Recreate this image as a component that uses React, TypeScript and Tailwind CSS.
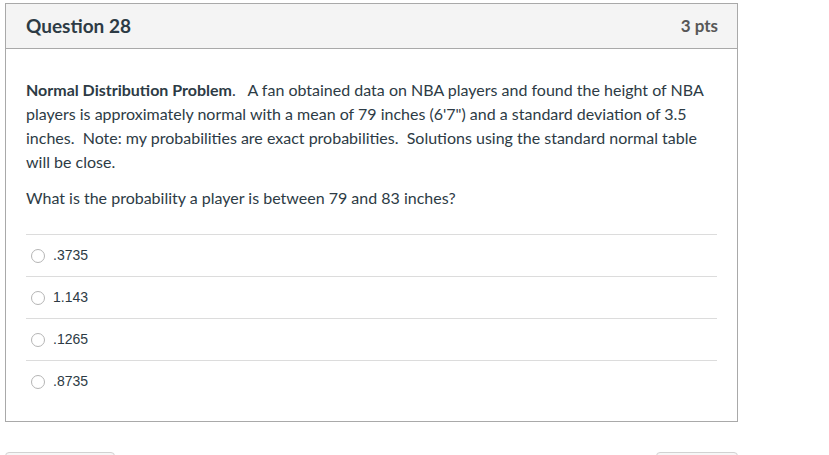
import React from "react";

const answers = [".3735", "1.143", ".1265", ".8735"];

export default function App() {
  return (
    <div className="min-h-screen bg-white pt-[3px] pl-[5px]" style={{ fontFamily: "Lato, 'Liberation Sans', sans-serif" }}>
      <div className="w-[733px] border border-[#a9a9a9] bg-white">
        {/* Header */}
        <div className="flex items-center justify-between h-[45px] bg-[#f4f4f4] border-b border-[#a9a9a9] pl-[20px] pr-[19px]">
          <span className="text-[19px] font-bold text-[#2d3b45]">Question 28</span>
          <span className="text-[17px] font-bold text-[#575757]">3 pts</span>
        </div>

        {/* Body */}
        <div className="px-[20px] pt-[29px] pb-[19px] text-[#2d3b45]">
          <p className="text-[16px] leading-[24px]">
            <strong>Normal Distribution Problem</strong>.&nbsp;&nbsp; A fan obtained data on NBA players and found the height of NBA
            players is approximately normal with a mean of 79 inches (6'7") and a standard deviation of 3.5
            inches.&nbsp; Note: my probabilities are exact probabilities.&nbsp; Solutions using the standard normal table
            will be close.
          </p>
          <p className="text-[16px] leading-[24px] mt-[12px]">
            What is the probability a player is between 79 and 83 inches?
          </p>

          <div className="mt-[24px]">
            {answers.map((a) => (
              <div key={a} className="flex items-center h-[42px] pl-[5px] border-t border-[#dcdcdc]">
                <span className="w-[14px] h-[14px] rounded-full border border-[#b5b5b5] bg-white mr-[8px]" />
                <span
                  className="text-[14px] text-[#2d3b45]"
                  style={{ fontFamily: "'Liberation Sans', Arial, sans-serif" }}
                >
                  {a}
                </span>
              </div>
            ))}
          </div>
        </div>
      </div>

      {/* Nav buttons (partially visible) */}
      <div className="flex justify-between w-[733px] mt-[30px]">
        <div className="w-[110px] h-[36px] rounded-[4px] border border-[#d2d2d2] bg-[#f7f7f7]" />
        <div className="w-[82px] h-[36px] rounded-[4px] border border-[#d2d2d2] bg-[#f7f7f7]" />
      </div>
    </div>
  );
}
